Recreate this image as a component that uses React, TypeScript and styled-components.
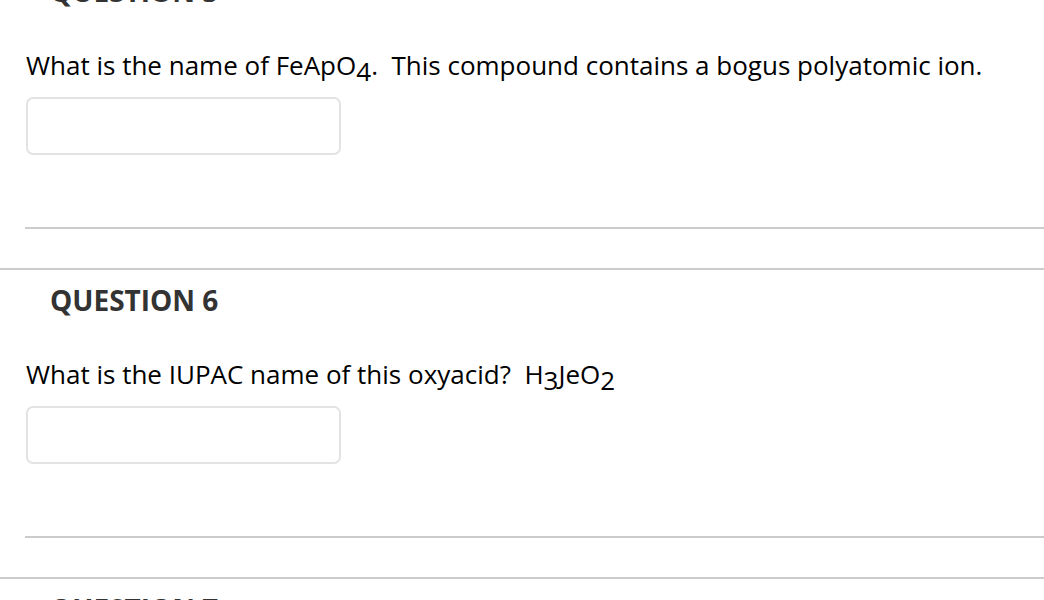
import React from 'react';
import styled, { createGlobalStyle } from 'styled-components';

const GlobalStyle = createGlobalStyle`
  html, body {
    margin: 0;
    padding: 0;
    background: #ffffff;
    overflow: hidden;
  }
  body {
    font-family: 'Open Sans', 'Noto Sans', sans-serif;
  }
`;

// the page is shown scrolled, so the list starts above the window
const Page = styled.div`
  width: 1044px;
  margin-top: -41px;
`;

const QuestionBlock = styled.section`
  border-top: 2px solid #cccccc;
  padding-bottom: 39px;
`;

const Heading = styled.h2`
  margin: 0;
  padding: 12px 0 0 50px;
  font-size: 28px;
  line-height: 36px;
  font-weight: 700;
  color: #333333;
`;

const Body = styled.div`
  padding-left: 25px;
  padding-top: 38px;
`;

const Prompt = styled.p`
  margin: 0 0 14px 1px;
  font-size: 26px;
  line-height: 36px;
  color: #000000;
`;

const Sub = styled.sub`
  font-size: inherit;
  vertical-align: sub;
  line-height: 0;
`;

const AnswerBox = styled.input`
  display: block;
  box-sizing: border-box;
  margin-left: 1px;
  width: 315px;
  height: 58px;
  border: 2px solid #e3e3e3;
  border-radius: 7px;
  background: #ffffff;
  outline: none;
  font-family: inherit;
  font-size: 18px;
  padding: 0 12px;
`;

const Divider = styled.hr`
  margin: 72px 0 0 0;
  border: none;
  height: 2px;
  background: #cccccc;
`;

interface Question {
  num: number;
  prompt: React.ReactNode;
}

const questions: Question[] = [
  {
    num: 5,
    prompt: (
      <>
        What is the name of FeApO<Sub>4</Sub>.&nbsp; This compound contains a bogus polyatomic ion.
      </>
    ),
  },
  {
    num: 6,
    prompt: (
      <>
        What is the IUPAC name of this oxyacid?&nbsp; H<Sub>3</Sub>JeO<Sub>2</Sub>
      </>
    ),
  },
  {
    num: 7,
    prompt: <>What is the name of this compound?</>,
  },
];

const App = () => {
  return (
    <>
      <GlobalStyle />
      <Page>
        {questions.map((q) => (
          <QuestionBlock key={q.num}>
            <Heading>QUESTION {q.num}</Heading>
            <Body>
              <Prompt>{q.prompt}</Prompt>
              <AnswerBox type="text" aria-label={`Answer ${q.num}`} />
              <Divider />
            </Body>
          </QuestionBlock>
        ))}
      </Page>
    </>
  );
};

export default App;
